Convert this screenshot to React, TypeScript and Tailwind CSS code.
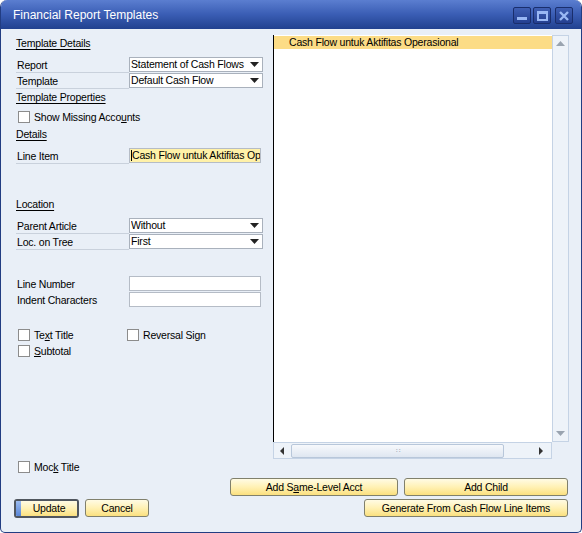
import React from 'react';

const font = { fontFamily: '"Liberation Sans", Arial, sans-serif' };

function Header({ text, className = '' }: { text: string; className?: string }) {
  return (
    <div className={`h-[14px] leading-[14px] ${className}`}>
      <span className="underline underline-offset-[2px] decoration-black">{text}</span>
    </div>
  );
}

function Select({ value }: { value: string }) {
  return (
    <div className="w-[134px] h-[15px] bg-white border border-[#a9b1bc] flex items-center pl-[1px] pr-[3px]">
      <span className="flex-1 leading-[13px] truncate">{value}</span>
      <svg width="9" height="5" viewBox="0 0 9 5">
        <path d="M0 0h9L4.5 5z" fill="#222" />
      </svg>
    </div>
  );
}

function Input({ value = '', yellow = false }: { value?: string; yellow?: boolean }) {
  return (
    <div
      className={`w-[132px] h-[15px] border border-[#b5bcc6] flex items-center overflow-hidden whitespace-nowrap leading-[13px] ${
        yellow ? 'bg-[#fff1a8]' : 'bg-white'
      }`}
    >
      {yellow && <span className="w-[1px] h-[11px] bg-black ml-[1px] shrink-0" />}
      <span>{value}</span>
    </div>
  );
}

function FieldRow({
  label,
  children,
  line = true,
  className = '',
}: {
  label: string;
  children: React.ReactNode;
  line?: boolean;
  className?: string;
}) {
  return (
    <div className={`flex items-start h-[16px] ${className}`}>
      <div
        className={`w-[113px] h-[16px] pl-[1px] pt-[2px] leading-[12px] ${
          line ? 'border-b border-[#c9d1dc]' : ''
        }`}
      >
        {label}
      </div>
      {children}
    </div>
  );
}

function Check({ label, className = '' }: { label: React.ReactNode; className?: string }) {
  return (
    <div className={`flex items-center h-[14px] ${className}`}>
      <div className="w-[12px] h-[12px] bg-white border border-[#8c8c8c] ml-[2px]" />
      <span className="ml-[4px] leading-[14px]">{label}</span>
    </div>
  );
}

function Btn({ children, className = '' }: { children: React.ReactNode; className?: string }) {
  return (
    <div
      className={`h-[18px] flex items-center justify-center rounded-[3px] border border-[#80806c] bg-gradient-to-b from-[#fffbe4] via-[#fff1b4] to-[#fbe07e] leading-[14px] ${className}`}
    >
      {children}
    </div>
  );
}

export default function App() {
  return (
    <div
      className="w-[582px] h-[533px] flex flex-col bg-[#e9eff7] text-[10.5px] tracking-[-0.2px] text-black rounded-t-[7px] rounded-b-[5px] overflow-hidden border-x border-b border-[#223d82]"
      style={font}
    >
      {/* Title bar */}
      <div className="h-[29px] shrink-0 flex items-center bg-gradient-to-b from-[#5b7ed0] via-[#3a5db4] to-[#21418f] pl-[12px] pr-[8px]">
        <span className="flex-1 text-white text-[12px] tracking-normal">Financial Report Templates</span>
        <div className="flex gap-[2px] items-center mt-[2px]">
          <div className="w-[18px] h-[17px] rounded-[2px] border border-[#1a2e6c] bg-gradient-to-b from-[#3f5fb4] to-[#243f90] flex items-end justify-center pb-[3px]">
            <div className="w-[10px] h-[3px] bg-[#9ab8f4]" />
          </div>
          <div className="w-[18px] h-[17px] rounded-[2px] border border-[#1a2e6c] bg-gradient-to-b from-[#3f5fb4] to-[#243f90] flex items-center justify-center">
            <div className="w-[11px] h-[10px] border-[#9ab8f4] border-2 border-t-[3px]" />
          </div>
          <div className="w-[18px] h-[17px] ml-[2px] rounded-[2px] border border-[#1a2e6c] bg-gradient-to-b from-[#3f5fb4] to-[#243f90] flex items-center justify-center">
            <svg width="10" height="10" viewBox="0 0 10 10">
              <path d="M1 1l8 8M9 1l-8 8" stroke="#9ab8f4" strokeWidth="2.4" />
            </svg>
          </div>
        </div>
      </div>

      {/* Top section */}
      <div className="flex pt-[6px]">
        {/* Left form */}
        <div className="w-[256px] ml-[15px] flex flex-col">
          <Header text="Template Details" className="mt-[1px]" />
          <FieldRow label="Report" className="mt-[7px]">
            <Select value="Statement of Cash Flows" />
          </FieldRow>
          <FieldRow label="Template">
            <Select value="Default Cash Flow" />
          </FieldRow>
          <Header text="Template Properties" className="mt-[1px]" />
          <Check
            className="mt-[6px]"
            label={
              <>
                Show Missing Acco<span className="underline">u</span>nts
              </>
            }
          />
          <Header text="Details" className="mt-[3px]" />
          <FieldRow label="Line Item" className="mt-[7px]">
            <Input yellow value="Cash Flow untuk Aktifitas Operasional" />
          </FieldRow>
          <Header text="Location" className="mt-[33px]" />
          <FieldRow label="Parent Article" className="mt-[7px]">
            <Select value="Without" />
          </FieldRow>
          <FieldRow label="Loc. on Tree">
            <Select value="First" />
          </FieldRow>
          <FieldRow label="Line Number" line={false} className="mt-[26px]">
            <Input />
          </FieldRow>
          <FieldRow label="Indent Characters" line={false}>
            <Input />
          </FieldRow>
          <div className="flex mt-[20px]">
            <Check
              className="w-[109px]"
              label={
                <>
                  Te<span className="underline">x</span>t Title
                </>
              }
            />
            <Check label="Reversal Sign" />
          </div>
          <Check
            className="mt-[2px]"
            label={
              <>
                <span className="underline">S</span>ubtotal
              </>
            }
          />
        </div>

        {/* List */}
        <div className="ml-[1px] w-[296px] h-[424px] flex flex-col">
          <div className="flex flex-1 min-h-0">
            <div className="flex-1 bg-white border-l border-black pt-[1px]">
              <div className="h-[13px] bg-[#fcdc86] pl-[15px] leading-[13px]">
                Cash Flow untuk Aktifitas Operasional
              </div>
            </div>
            <div className="w-[17px] bg-[#eef3f9] border border-[#c5d3e5] flex flex-col justify-between items-center py-[5px]">
              <svg width="9" height="5" viewBox="0 0 9 5">
                <path d="M0 5h9L4.5 0z" fill="#9aa4b0" />
              </svg>
              <svg width="9" height="5" viewBox="0 0 9 5">
                <path d="M0 0h9L4.5 5z" fill="#9aa4b0" />
              </svg>
            </div>
          </div>
          <div className="flex h-[17px]">
            <div className="w-[279px] bg-[#eef3f9] border border-[#c5d3e5] flex items-center pl-[6px] pr-[8px]">
              <svg width="4" height="8" viewBox="0 0 4 8">
                <path d="M4 0v8L0 4z" fill="#333" />
              </svg>
              <div className="ml-[7px] w-[213px] h-[14px] rounded-[2px] border border-[#b8c7da] bg-gradient-to-b from-[#f7f9fc] to-[#dfe7f1] flex items-center justify-center text-[7px] text-[#9aa6b4] leading-none">
                ∷
              </div>
              <div className="flex-1" />
              <svg width="4" height="8" viewBox="0 0 4 8">
                <path d="M0 0v8l4-4z" fill="#333" />
              </svg>
            </div>
          </div>
        </div>
      </div>

      {/* Mock Title */}
      <Check
        className="ml-[15px] mt-[1px]"
        label={
          <>
            Moc<span className="underline">k</span> Title
          </>
        }
      />

      <div className="flex justify-end gap-[6px] mt-[4px] mr-[13px]">
        <Btn className="w-[168px]">
          Add S<span className="underline">a</span>me-Level Acct
        </Btn>
        <Btn className="w-[164px]">Add Child</Btn>
      </div>

      <div className="flex items-start mt-[3px] ml-[13px] mr-[13px]">
        <div className="w-[65px] h-[19px] rounded-[3px] border-2 border-[#50565e] flex overflow-hidden">
          <div className="w-[5px] bg-gradient-to-b from-[#9cbcf0] to-[#5a86d6]" />
          <div className="flex-1 flex items-center justify-center bg-gradient-to-b from-[#fffbe4] via-[#fff1b4] to-[#fbe07e]">
            Update
          </div>
        </div>
        <Btn className="w-[64px] ml-[6px]">Cancel</Btn>
        <div className="flex-1" />
        <Btn className="w-[204px]">Generate From Cash Flow Line Items</Btn>
      </div>
    </div>
  );
}
